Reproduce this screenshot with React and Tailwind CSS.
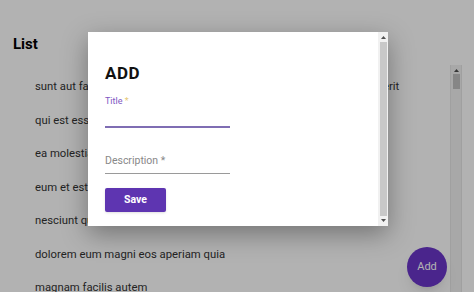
import React from 'react';

const posts = [
  'sunt aut facere repellat provident occaecati excepturi optio reprehenderit',
  'qui est esse',
  'ea molestias quasi exercitationem repellat qui ipsa sit aut',
  'eum et est occaecati',
  'nesciunt quas odio',
  'dolorem eum magni eos aperiam quia',
  'magnam facilis autem',
];

function Arrow({ down, className }) {
  return (
    <svg width="5" height="3" viewBox="0 0 5 3" className={className}>
      <path d={down ? 'M0 0h5L2.5 3z' : 'M0 3h5L2.5 0z'} fill="#505050" />
    </svg>
  );
}

export default function App() {
  return (
    <div
      className="relative h-[292px] w-[474px] overflow-hidden bg-white"
      style={{ fontFamily: 'Roboto, "Liberation Sans", Arial, sans-serif' }}
    >
      {/* page */}
      <h1 className="pl-[13px] pt-[35px] text-[15px] font-bold leading-[18px] text-black">List</h1>
      <div className="mt-[12px] mr-[12px] flex h-[260px] border-b border-[#d8d8d8]">
        <ul className="flex-1 pl-[35px] pt-[14px]">
          {posts.map((p) => (
            <li key={p} className="h-[33.5px] text-[11.3px] leading-[16px] whitespace-nowrap text-[#333]">
              {p}
            </li>
          ))}
        </ul>
        <div className="flex w-[12px] flex-col items-center border-x border-[#e6e6e6] bg-[#f1f1f1]">
          <Arrow className="mt-[4px]" />
          <div className="mt-[2px] h-[15px] w-[7px] bg-[#c1c1c1]" />
          <div className="flex-1" />
          <Arrow down className="mb-[1px]" />
        </div>
      </div>

      {/* FAB */}
      <button className="absolute left-[407px] top-[247px] flex h-[40px] w-[40px] items-center justify-center rounded-full bg-[#6a35c9] text-[11px] text-white shadow-lg">
        Add
      </button>

      {/* backdrop */}
      <div className="absolute inset-0 bg-black/30" />

      {/* dialog */}
      <div className="absolute left-[88px] top-[32px] flex h-[194px] w-[300px] bg-white shadow-[0_8px_24px_rgba(0,0,0,0.35)]">
        <div className="flex-1 pl-[17px] pt-[31px]">
          <h2 className="text-[17px] font-bold leading-[20px] tracking-[0.5px] text-[#111]">ADD</h2>
          <div className="mt-[13px] w-[125px]">
            <div className="text-[9px] leading-[11px] text-[#7e57c2]">
              Title <span className="text-[#e6c97a]">*</span>
            </div>
            <div className="mt-[19px] h-[2px] bg-[#7f6db3]" />
          </div>
          <div className="mt-[25px] w-[125px]">
            <div className="text-[10.5px] leading-[16px] text-[#888]">Description *</div>
            <div className="mt-[4px] h-px bg-[#9a9a9a]" />
          </div>
          <button className="mt-[14px] h-[24px] w-[61px] rounded-[2px] bg-[#5e35b1] text-[10.5px] font-bold text-white shadow">
            Save
          </button>
        </div>
        <div className="flex w-[10px] flex-col items-center bg-[#f1f1f1] py-[4px]">
          <Arrow />
          <div className="my-[3px] w-[7px] flex-1 bg-[#c8c8c8]" />
          <Arrow down />
        </div>
      </div>
    </div>
  );
}
